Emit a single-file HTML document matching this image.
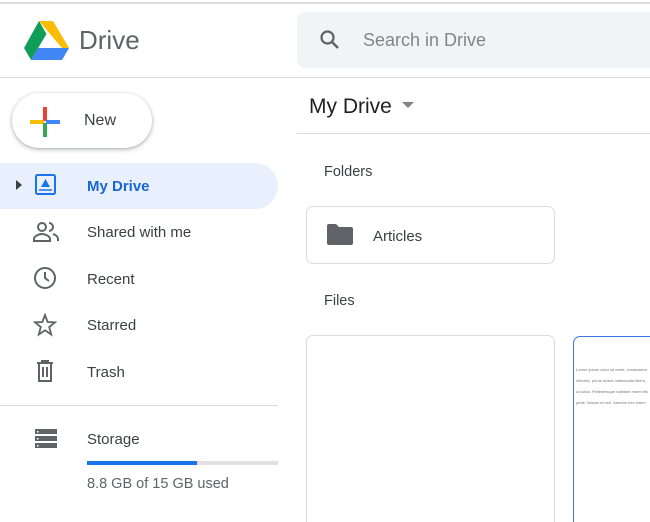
<!DOCTYPE html>
<html><head><style>
*{margin:0;padding:0;box-sizing:border-box}
html,body{width:650px;height:522px;overflow:hidden}
body{background:#fff;font-family:"Liberation Sans",sans-serif;position:relative;color:#3c4043}
.a{position:absolute}
.t{font-size:15px;color:#3c4043}
</style></head><body>
<div class="a" style="left:0;top:2px;width:650px;height:2px;background:#ddd"></div>
<div class="a" style="left:0;top:77px;width:650px;height:1px;background:#dadce0"></div>
<svg class="a" style="left:24px;top:21px" width="45" height="39" viewBox="0 0 45 39">
<polygon points="15,0 29,0 45,27 38,27" fill="#fbbc04"/>
<polygon points="15,0 22.5,13 7,39 0,27" fill="#0f9d58"/>
<polygon points="7,39 14,27 45,27 38,39" fill="#4285f4"/>
</svg>
<div class="a" style="left:79px;top:25px;font-size:26px;color:#5f6368">Drive</div>
<div class="a" style="left:297px;top:12px;width:360px;height:56px;background:#f1f3f4;border-radius:8px"></div>
<svg class="a" style="left:318px;top:28px" width="24" height="24" viewBox="0 0 24 24"><circle cx="9.5" cy="9.5" r="6" fill="none" stroke="#5f6368" stroke-width="2.2"/><line x1="14" y1="14" x2="20" y2="20" stroke="#5f6368" stroke-width="2.4"/></svg>
<div class="a" style="left:363px;top:30px;font-size:18px;color:#80868b">Search in Drive</div>
<div class="a" style="left:12px;top:93px;width:140px;height:55px;border-radius:28px;background:#fff;box-shadow:0 1px 3px rgba(60,64,67,.35),0 2px 6px rgba(60,64,67,.15)"></div>
<svg class="a" style="left:30px;top:107px" width="30" height="30" viewBox="0 0 30 30"><rect x="13" y="0" width="4" height="14" fill="#ea4335"/><rect x="0" y="13" width="14" height="4" fill="#fbbc04"/><rect x="13" y="16" width="4" height="14" fill="#34a853"/><rect x="16" y="13" width="14" height="4" fill="#4285f4"/></svg>
<div class="a" style="left:84px;top:112px;font-size:16px;color:#3c4043">New</div>
<div class="a" style="left:0;top:163px;width:278px;height:46px;background:#e8f0fe;border-radius:0 23px 23px 0"></div>
<svg class="a" style="left:16px;top:180px" width="6" height="10"><polygon points="0,0 6,5 0,10" fill="#3c4043"/></svg>
<svg class="a" style="left:35px;top:174px" width="22" height="22" viewBox="0 0 22 22"><rect x="1" y="1" width="19" height="19" rx="1.5" fill="none" stroke="#1a73e8" stroke-width="2"/><line x1="4" y1="16" x2="17" y2="16" stroke="#1a73e8" stroke-width="1.5"/><polygon points="10.5,5 15,13 6,13" fill="#1a73e8"/></svg>
<div class="a" style="left:87px;top:178px;font-size:15px;font-weight:bold;color:#1967d2">My Drive</div>
<svg class="a" style="left:32px;top:221px" width="28" height="22" viewBox="0 0 28 22"><circle cx="10" cy="6" r="4" fill="none" stroke="#5f6368" stroke-width="2"/><path d="M2 20v-2c0-3 5-5 8-5s8 2 8 5v2z" fill="none" stroke="#5f6368" stroke-width="2"/><path d="M17 2a4 4 0 0 1 0 8M21 13c3 1 5 3 5 5v2" fill="none" stroke="#5f6368" stroke-width="2"/></svg>
<div class="a t" style="left:87px;top:224px">Shared with me</div>
<svg class="a" style="left:33px;top:266px" width="24" height="24" viewBox="0 0 24 24"><circle cx="12" cy="12" r="10" fill="none" stroke="#5f6368" stroke-width="2"/><path d="M12 6v6l4 3" fill="none" stroke="#5f6368" stroke-width="2"/></svg>
<div class="a t" style="left:87px;top:271px">Recent</div>
<svg class="a" style="left:33px;top:313px" width="24" height="24" viewBox="0 0 24 24"><polygon points="12,2 14.6,9 22,9.3 16.2,14 18.2,21.5 12,17.3 5.8,21.5 7.8,14 2,9.3 9.4,9" fill="none" stroke="#5f6368" stroke-width="1.8"/></svg>
<div class="a t" style="left:87px;top:317px">Starred</div>
<svg class="a" style="left:34px;top:359px" width="22" height="24" viewBox="0 0 22 24"><path d="M3 4h16M8 4V2h6v2M5 4v18h12V4" fill="none" stroke="#5f6368" stroke-width="2"/><path d="M9 8v10M13 8v10" stroke="#5f6368" stroke-width="2"/></svg>
<div class="a t" style="left:87px;top:364px">Trash</div>
<div class="a" style="left:0;top:405px;width:278px;height:1px;background:#dadce0"></div>
<svg class="a" style="left:35px;top:429px" width="22" height="19" viewBox="0 0 22 19"><rect x="0" y="0" width="22" height="5" fill="#5f6368"/><rect x="0" y="7" width="22" height="5" fill="#5f6368"/><rect x="0" y="14" width="22" height="5" fill="#5f6368"/><rect x="2" y="2" width="1.5" height="1.5" fill="#fff"/><rect x="2" y="9" width="1.5" height="1.5" fill="#fff"/><rect x="2" y="16" width="1.5" height="1.5" fill="#fff"/></svg>
<div class="a t" style="left:87px;top:431px">Storage</div>
<div class="a" style="left:87px;top:461px;width:191px;height:4px;background:#e0e0e0"></div>
<div class="a" style="left:87px;top:461px;width:110px;height:4px;background:#1a73e8"></div>
<div class="a" style="left:87px;top:476px;font-size:14.5px;color:#5f6368">8.8 GB of 15 GB used</div>
<div class="a" style="left:309px;top:95px;font-size:21px;color:#202124">My Drive</div>
<svg class="a" style="left:402px;top:102px" width="12" height="6"><polygon points="0,0 12,0 6,6" fill="#80868b"/></svg>
<div class="a" style="left:297px;top:133px;width:353px;height:1px;background:#dadce0"></div>
<div class="a" style="left:324px;top:164px;font-size:14.5px;color:#3c4043">Folders</div>
<div class="a" style="left:306px;top:206px;width:249px;height:58px;border:1px solid #dadce0;border-radius:7px"></div>
<svg class="a" style="left:327px;top:224px" width="26" height="21" viewBox="0 0 26 21"><path d="M0 2a2 2 0 0 1 2-2h7l3 3h12a2 2 0 0 1 2 2v14a2 2 0 0 1-2 2H2a2 2 0 0 1-2-2z" fill="#5f6368"/></svg>
<div class="a" style="left:373px;top:228px;font-size:15px;color:#3c4043">Articles</div>
<div class="a" style="left:324px;top:293px;font-size:14.5px;color:#3c4043">Files</div>
<div class="a" style="left:306px;top:335px;width:249px;height:200px;border:1px solid #dadce0;border-radius:7px"></div>
<div class="a" style="left:573px;top:336px;width:90px;height:200px;border:1.5px solid #3b78e7;border-radius:7px"></div>
<div class="a" style="left:576px;top:364px;font-size:4px;line-height:11px;color:#777;white-space:nowrap">Lorem ipsum dolor sit amet, consectetur<br>ultricies, purus lectus malesuada libero,<br>a luctus. Pellentesque habitant morbi tris<br>pede. Mauris et orci. Aenean nec lorem</div>
</body></html>
